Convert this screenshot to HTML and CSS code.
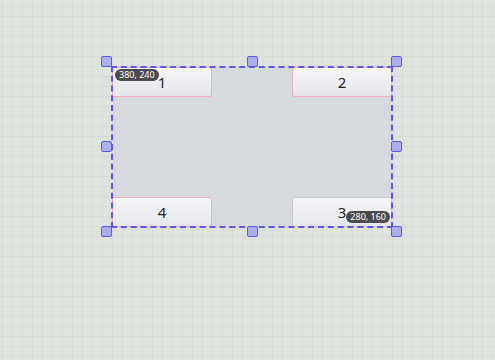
FILE: index.html
```html
<!DOCTYPE html>
<html>
<head>
<meta charset="utf-8">
<link rel="stylesheet" href="styles.css">
</head>
<body>
<div class="canvas">
  <div class="frame">
    <div class="row">
      <div class="panel pink">1</div>
      <div class="panel pink">2</div>
    </div>
    <div class="row">
      <div class="panel pink">4</div>
      <div class="panel gray">3</div>
    </div>
    <div class="outline"></div>
    <div class="badge badge-tl">380, 240</div>
    <div class="badge badge-br">280, 160</div>
    <div class="handle h-tl"></div>
    <div class="handle h-tm"></div>
    <div class="handle h-tr"></div>
    <div class="handle h-ml"></div>
    <div class="handle h-mr"></div>
    <div class="handle h-bl"></div>
    <div class="handle h-bm"></div>
    <div class="handle h-br"></div>
  </div>
</div>
</body>
</html>
```
FILE: styles.css
```css
html, body {
  margin: 0;
  padding: 0;
}
.canvas {
  position: relative;
  width: 495px;
  height: 360px;
  overflow: hidden;
  background-color: #dfe3de;
  background-image:
    linear-gradient(to right, #d5dbd5 1px, transparent 1px),
    linear-gradient(to bottom, #d5dbd5 1px, transparent 1px);
  background-size: 10px 10px;
  background-position: 2px 6px;
  font-family: "Noto Sans", "DejaVu Sans", sans-serif;
}
.frame {
  position: absolute;
  left: 112px;
  top: 67px;
  width: 280px;
  height: 160px;
  background: #d6dadf;
  display: flex;
  flex-direction: column;
  justify-content: space-between;
}
.row {
  display: flex;
  justify-content: space-between;
}
.panel {
  box-sizing: border-box;
  width: 100px;
  height: 30px;
  display: flex;
  align-items: center;
  justify-content: center;
  font-size: 15px;
  color: #1e1e22;
  background: linear-gradient(to bottom, #f6f6f9, #e5e6eb);
  border-radius: 2px;
}
.pink {
  border: 1px solid #f0acc2;
}
.gray {
  border: 1px solid #c9cace;
}
.outline {
  position: absolute;
  left: -1px;
  top: -1px;
  right: -1px;
  bottom: -1px;
  border: 2px dashed #5d55ee;
  pointer-events: none;
}
.badge {
  position: absolute;
  height: 12px;
  line-height: 12px;
  padding: 0 4px;
  font-size: 9px;
  color: #ffffff;
  background: #4b4b4d;
  border-radius: 6px;
  white-space: nowrap;
}
.badge-tl {
  left: 3px;
  top: 2px;
}
.badge-br {
  right: 2px;
  bottom: 4px;
}
.handle {
  position: absolute;
  box-sizing: border-box;
  width: 11px;
  height: 11px;
  background: #aab0ee;
  border: 1.5px solid #5a58ee;
  border-radius: 2px;
}
.h-tl { left: -11px; top: -11px; }
.h-tm { left: 135px; top: -11px; }
.h-tr { left: 279px; top: -11px; }
.h-ml { left: -11px; top: 74px; }
.h-mr { left: 279px; top: 74px; }
.h-bl { left: -11px; top: 159px; }
.h-bm { left: 135px; top: 159px; }
.h-br { left: 279px; top: 159px; }
```
